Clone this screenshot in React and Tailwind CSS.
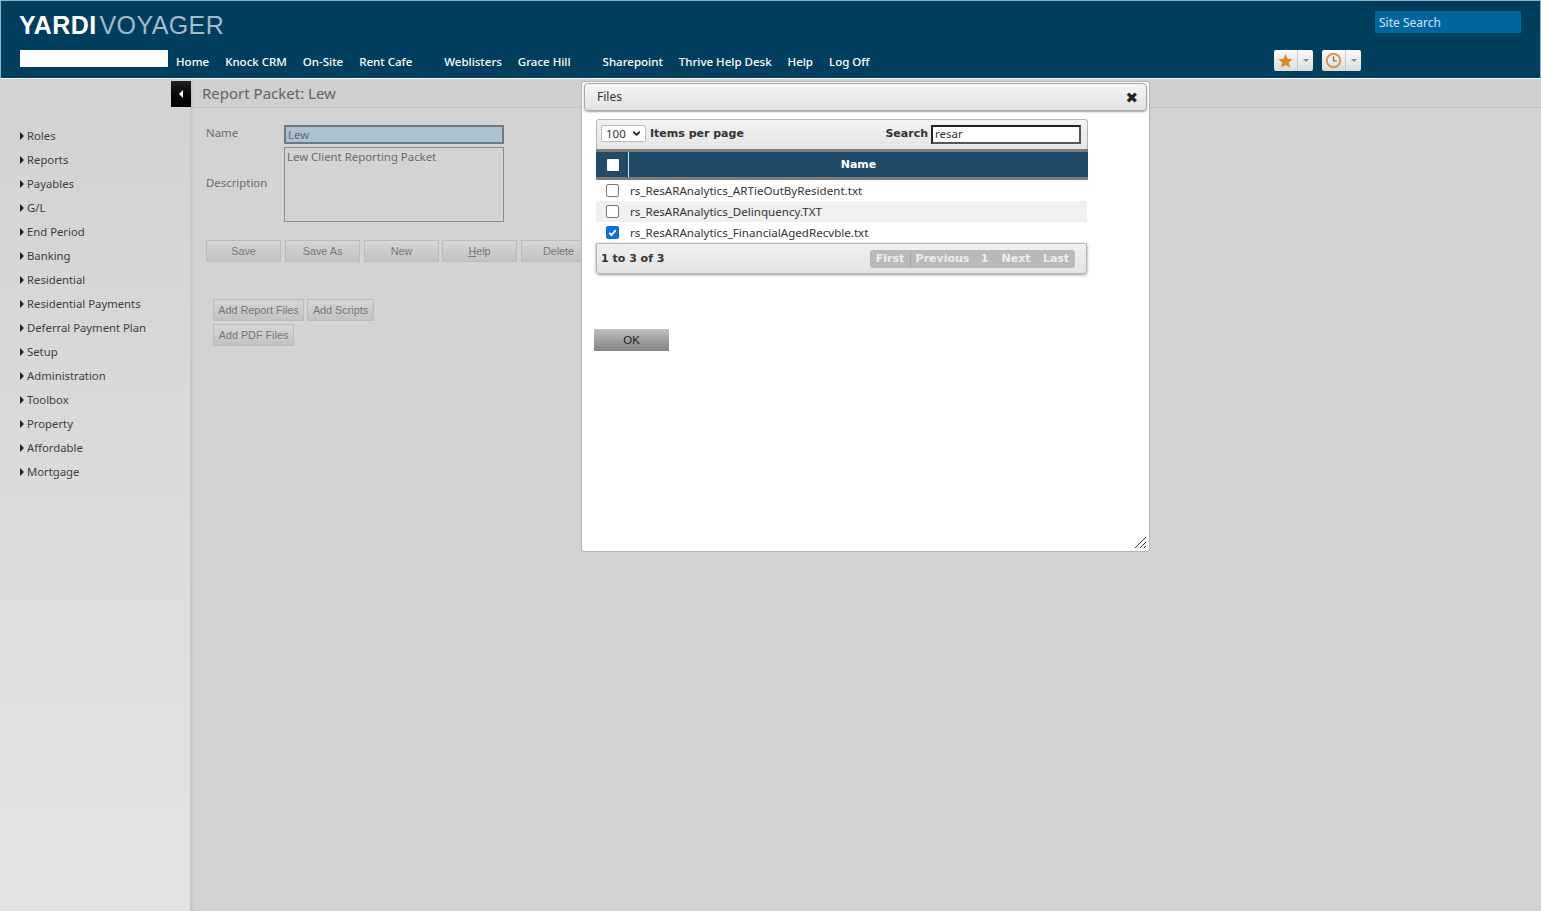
import { ChevronDown } from "lucide-react";

const FONT = "font-['Noto_Sans','DejaVu_Sans',sans-serif]";

const menuItems = [
  "Roles",
  "Reports",
  "Payables",
  "G/L",
  "End Period",
  "Banking",
  "Residential",
  "Residential Payments",
  "Deferral Payment Plan",
  "Setup",
  "Administration",
  "Toolbox",
  "Property",
  "Affordable",
  "Mortgage",
];

const navItems = [
  { label: "Home" },
  { label: "Knock CRM" },
  { label: "On-Site" },
  { label: "Rent Cafe" },
  { label: "Weblisters", extra: true },
  { label: "Grace Hill" },
  { label: "Sharepoint", extra: true },
  { label: "Thrive Help Desk" },
  { label: "Help" },
  { label: "Log Off" },
];

const files = [
  { name: "rs_ResARAnalytics_ARTieOutByResident.txt", checked: false, shaded: false },
  { name: "rs_ResARAnalytics_Delinquency.TXT", checked: false, shaded: true },
  { name: "rs_ResARAnalytics_FinancialAgedRecvble.txt", checked: true, shaded: false },
];

// Boton gris del formulario de fondo
function GrayButton({ children, className = "" }) {
  return (
    <div
      className={`flex h-[22px] items-center justify-center border border-[#bcbcbc] bg-gradient-to-b from-[#d6d6d6] to-[#c2c2c2] text-[10.8px] text-[#777] font-['Liberation_Sans',sans-serif] ${className}`}
    >
      {children}
    </div>
  );
}

// Boton de favoritos / recientes en la cabecera
function HeaderMenuButton({ children }) {
  return (
    <div className="flex h-[21px] w-[39px] rounded-[2px] bg-gradient-to-b from-[#fbfbfb] to-[#dcdcdc]">
      <div className="flex w-[24px] items-center justify-center border-r border-[#c8c8c8]">{children}</div>
      <div className="flex flex-1 items-center justify-center">
        <div className="h-0 w-0 border-x-[3px] border-t-[3px] border-x-transparent border-t-[#7c8ea0]" />
      </div>
    </div>
  );
}

function Header() {
  return (
    <header className="h-[79px] shrink-0 border border-[#8fb4c6] border-b-white bg-gradient-to-b from-[#003d5d] to-[#023f5f]">
      <div className="flex h-[48px] justify-between">
        <div className="pl-[18px] pt-[9px] font-['Liberation_Sans',sans-serif] text-[25px] leading-[30px] tracking-[0.4px]">
          <span className="font-bold text-white">YARDI</span>
          <span className="ml-[3px] text-[#a3bac8]">VOYAGER</span>
        </div>
        <div className="mr-[19px] mt-[10px] flex h-[22px] w-[146px] items-center bg-[#00659f] pl-[4px] pt-[1px] text-[12px] text-[#cfe6f5]">
          Site Search
        </div>
      </div>
      <div className="flex h-[29px] items-start justify-between">
        <div className="flex items-start">
          <div className="ml-[19px] mt-[1px] h-[17px] w-[148px] bg-white" />
          <nav className="ml-[8px] mt-[5px] flex gap-[16px] text-[11.5px] font-medium leading-[16px] text-white">
            {navItems.map((item) => (
              <span key={item.label} className={item.extra ? "ml-[16px]" : ""}>
                {item.label}
              </span>
            ))}
          </nav>
        </div>
        <div className="mr-[179px] mt-[1px] flex gap-[9px]">
          <HeaderMenuButton>
            <svg width="17" height="16" viewBox="0 0 24 24" fill="#dc8c1e">
              <path d="M12 1.5l3.2 7 7.6.8-5.7 5.1 1.6 7.5L12 18.1l-6.7 3.8 1.6-7.5L1.2 9.3l7.6-.8z" />
            </svg>
          </HeaderMenuButton>
          <HeaderMenuButton>
            <svg width="17" height="17" viewBox="0 0 24 24" fill="none" stroke="#d09a45" strokeWidth="2.6">
              <circle cx="12" cy="12" r="9.5" />
              <path d="M12 6v6.5h5" stroke="#8a7a5c" strokeWidth="2" />
            </svg>
          </HeaderMenuButton>
        </div>
      </div>
    </header>
  );
}

function Sidebar() {
  return (
    <aside className="relative w-[191px] shrink-0 border-r border-[#c6c6c6] bg-gradient-to-b from-[#d2d2d2] to-[#e4e4e4] pl-[20px] pt-[44px] shadow-[1px_0_3px_rgba(0,0,0,0.08)]">
      <button className="absolute right-[-1px] top-[1px] flex h-[26px] w-[20px] items-center justify-center bg-gradient-to-b from-[#222] to-[#000]">
        <div className="h-0 w-0 border-y-[4px] border-r-[4px] border-y-transparent border-r-white" />
      </button>
      <ul className="flex flex-col">
        {menuItems.map((item) => (
          <li key={item} className="flex h-[24px] items-center gap-[3px] text-[11.3px] text-[#3c3f42]">
            <span className="h-0 w-0 border-y-[4px] border-l-[4px] border-y-transparent border-l-[#222]" />
            {item}
          </li>
        ))}
      </ul>
    </aside>
  );
}

function PacketForm() {
  return (
    <main className="min-w-0 flex-1">
      <div className="flex h-[28px] items-center border-b border-[#c2c2c2] bg-[#cfcfcf] pl-[11px] text-[15px] text-[#646464]">
        Report Packet: Lew
      </div>
      <div className="pl-[15px] pt-[17px] text-[11.4px] text-[#6b6b6b]">
        <div className="flex">
          <div className="w-[78px] leading-[16px]">Name</div>
          <div className="flex h-[19px] w-[220px] items-center border-2 border-[#6f7a80] bg-[#adc2d0] pl-[2px] pt-[1px] text-[#5d6b74]">
            Lew
          </div>
        </div>
        <div className="mt-[3px] flex">
          <div className="flex h-[75px] w-[78px] items-center pb-[3px]">Description</div>
          <div className="h-[75px] w-[220px] border border-[#8e8e8e] pl-[2px] pt-[1px] leading-[16px]">Lew Client Reporting Packet</div>
        </div>
        <div className="mt-[18px] flex gap-[4px]">
          <GrayButton className="w-[75px]">Save</GrayButton>
          <GrayButton className="w-[75px]">Save As</GrayButton>
          <GrayButton className="w-[75px]">New</GrayButton>
          <GrayButton className="ml-[-1px] w-[75px]">
            <span>
              <span className="underline">H</span>elp
            </span>
          </GrayButton>
          <GrayButton className="w-[75px]">Delete</GrayButton>
        </div>
        <div className="ml-[7px] mt-[37px] flex flex-col gap-[3px]">
          <div className="flex gap-[3px]">
            <GrayButton className="w-[91px]">Add Report Files</GrayButton>
            <GrayButton className="w-[67px]">Add Scripts</GrayButton>
          </div>
          <GrayButton className="w-[81px]">Add PDF Files</GrayButton>
        </div>
      </div>
    </main>
  );
}

function FilesDialog() {
  return (
    <div className="absolute left-[581px] top-[81px] h-[471px] w-[569px] rounded-[3px] border border-[#b5b5b5] bg-white">
      <div className="mx-[2px] mt-[1px] flex h-[28px] items-center justify-between rounded-[4px] border border-[#a9a9a9] bg-gradient-to-b from-[#f5f5f5] to-[#e2e2e2] pl-[12px] pr-[8px] text-[12px] text-[#333] shadow-[0_1px_2px_rgba(0,0,0,0.35)]">
        <span>Files</span>
        <span className="text-[15px] font-bold leading-none text-[#222]">✖</span>
      </div>

      <div className="ml-[14px] mt-[8px] w-[492px]">
        <div className="flex h-[30px] items-center justify-between rounded-t-[3px] border-x border-t border-[#b5b5b5] bg-gradient-to-b from-[#f3f3f3] to-[#e4e4e4] pb-[2px] pl-[4px] pr-[6px] font-['DejaVu_Sans',sans-serif] text-[11px] font-bold text-[#333]">
          <div className="flex items-center gap-[4px]">
            <div className="flex h-[17px] w-[45px] items-center justify-between rounded-[2px] border border-[#bbb] bg-white pl-[4px] pr-[3px] font-['Noto_Sans',sans-serif] text-[11.5px] font-normal">
              100
              <ChevronDown size={11} strokeWidth={4} className="text-[#222]" />
            </div>
            <span className="pt-[1px]">Items per page</span>
          </div>
          <div className="flex items-center gap-[3px]">
            <span className="pt-[2px]">Search</span>
            <div className="mt-[1px] flex h-[19px] w-[150px] items-center border-2 border-[#222] border-r-[#555] border-b-[#555] bg-white pl-[2px] font-['Noto_Sans',sans-serif] text-[11.5px] font-normal">
              resar
            </div>
          </div>
        </div>
        <div className="flex h-[31px] items-center border-y-[3px] border-[#7c7c7c] bg-[#204a68] text-white">
          <div className="flex h-full w-[33px] items-center justify-center border-r border-[#dbe3e8] pl-[2px]">
            <div className="h-[12px] w-[12px] rounded-[1px] bg-white" />
          </div>
          <div className="flex-1 pt-[1px] text-center font-['DejaVu_Sans',sans-serif] text-[11px] font-bold">Name</div>
        </div>
        <div className="w-[491px]">
          {files.map((file) => (
            <div key={file.name} className={`flex h-[21px] items-center text-[11.6px] text-[#333] ${file.shaded ? "bg-[#f0f0f0]" : ""}`}>
              <div className="flex w-[34px] justify-center pr-[2px]">
                {file.checked ? (
                  <div className="flex h-[13px] w-[13px] items-center justify-center rounded-[2px] bg-[#0b6fe0]">
                    <svg width="11" height="11" viewBox="0 0 12 12" fill="none" stroke="white" strokeWidth="2">
                      <path d="M2.5 6.5l2.4 2.4 4.6-5.4" />
                    </svg>
                  </div>
                ) : (
                  <div className="h-[13px] w-[13px] rounded-[2px] border border-[#767676] bg-white" />
                )}
              </div>
              {file.name}
            </div>
          ))}
        </div>
        <div className="flex h-[31px] w-[491px] items-center justify-between rounded-b-[3px] border border-[#b5b5b5] bg-gradient-to-b from-[#f1f1f1] to-[#e3e3e3] pl-[4px] pr-[11px] font-['DejaVu_Sans',sans-serif] text-[11px] font-bold text-[#333] shadow-[0_1px_3px_rgba(0,0,0,0.4)]">
          <span className="pt-[2px]">1 to 3 of 3</span>
          <div className="flex h-[18px] items-center rounded-[3px] bg-[#b9b9b9] pt-[1px] text-[#ececec]">
            <span className="flex h-full w-[41px] items-center justify-center border-r border-[#a5a5a5]">First</span>
            <span className="flex w-[63px] justify-center">Previous</span>
            <span className="flex w-[21px] justify-center">1</span>
            <span className="flex w-[42px] justify-center">Next</span>
            <span className="flex w-[38px] justify-center">Last</span>
          </div>
        </div>
      </div>

      <div className="ml-[12px] mt-[55px] flex h-[22px] w-[75px] items-center justify-center bg-gradient-to-b from-[#c0c0c0] to-[#828282] pt-[1px] font-['Liberation_Sans',sans-serif] text-[11.5px] text-[#222]">
        OK
      </div>

      <svg className="absolute bottom-[2px] right-[2px]" width="13" height="13" viewBox="0 0 13 13" stroke="#333" strokeWidth="1">
        <path d="M1 12L12 1M6 12l6-6M10 12l2-2" />
      </svg>
    </div>
  );
}

export default function App() {
  return (
    <div className={`relative flex h-[911px] w-[1541px] flex-col overflow-hidden bg-[#d3d3d3] ${FONT}`}>
      <Header />
      <div className="flex min-h-0 flex-1 pt-[1px]">
        <Sidebar />
        <PacketForm />
      </div>
      <FilesDialog />
    </div>
  );
}
